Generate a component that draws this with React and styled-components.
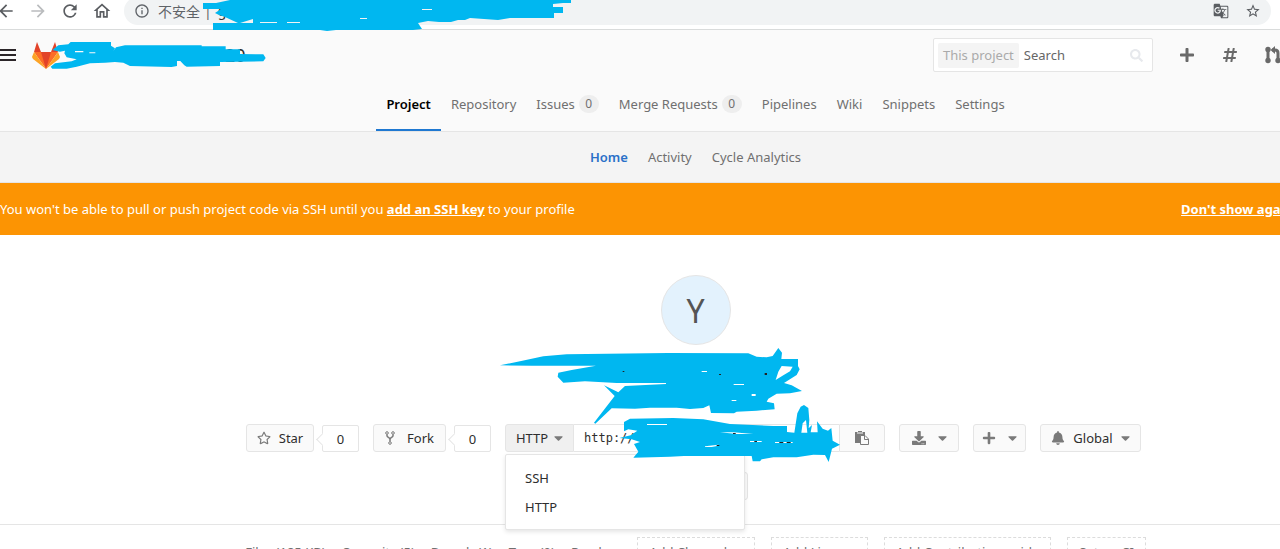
import React from 'react';
import styled, { createGlobalStyle, css } from 'styled-components';
import {
  MdArrowBack,
  MdArrowForward,
  MdGTranslate,
  MdInfoOutline,
  MdOutlineHome,
  MdRefresh,
  MdStarBorder,
} from 'react-icons/md';
import {
  FaBell,
  FaCaretDown,
  FaDownload,
  FaHashtag,
  FaPlus,
  FaRegStar,
  FaSearch,
} from 'react-icons/fa';

const colors = {
  text: '#2e2e2e',
  muted: '#707070',
  icon: '#7a7a7a',
  border: '#e5e5e5',
  blue: '#1f78d1',
  orange: '#fc9403',
  marker: '#00b7f0',
};

const GlobalStyle = createGlobalStyle`
  * {
    box-sizing: border-box;
  }
  html, body {
    margin: 0;
    height: 100%;
    overflow: hidden;
    background: #fff;
  }
  body, button, input {
    font-family: 'Noto Sans', 'Open Sans', 'Noto Sans CJK SC', sans-serif;
    font-size: 13px;
    line-height: 20px;
    color: ${colors.text};
  }
  a {
    color: inherit;
    text-decoration: none;
  }
`;

const Screen = styled.div`
  position: relative;
  height: 100vh;
  overflow: hidden;
`;

/* browser toolbar */

const BrowserBar = styled.div`
  display: flex;
  height: 30px;
  padding-right: 9px;
  border-bottom: 1px solid #d9dbdb;
`;

const BrowserButtons = styled.div`
  display: flex;
  height: 22px;
  margin-left: -10px;
  margin-right: 6px;
`;

const BrowserButton = styled.button`
  display: flex;
  align-items: center;
  justify-content: center;
  width: 32px;
  padding: 0;
  border: 0;
  background: none;
  color: ${(props) => (props.$dim ? '#babcbe' : '#5a5d61')};
  font-size: 20px;
`;

const AddressBar = styled.div`
  display: flex;
  flex: 1;
  align-items: center;
  height: 28px;
  margin-top: -3px;
  padding: 0 2px 0 10px;
  border-radius: 14px;
  background: #f1f3f4;
  color: #5f6368;
  font-size: 14px;
  svg {
    flex: none;
    font-size: 16px;
  }
`;

const Insecure = styled.span`
  margin: 0 4px 0 8px;
  font-family: 'Noto Sans CJK SC', sans-serif;
`;

const Address = styled.span`
  flex: 1;
  margin-left: 6px;
  color: #333;
`;

/* page header */

const Page = styled.div`
  min-width: 1391px;
`;

const Header = styled.header`
  height: 102px;
  border-bottom: 1px solid ${colors.border};
  background: #fafafa;
`;

const HeaderTop = styled.div`
  display: flex;
  align-items: center;
  height: 50px;
  padding-right: 97px;
`;

const Burger = styled.button`
  display: grid;
  gap: 3px;
  width: 16px;
  margin-right: 16px;
  padding: 0;
  border: 0;
  background: none;
`;

const BurgerLine = styled.span`
  height: 2px;
  background: #2b2528;
`;

const Title = styled.h1`
  flex: 1;
  margin: 0;
  padding-left: 165px;
  font-size: 18px;
  font-weight: 400;
  line-height: 24px;
`;

const SearchBox = styled.form`
  display: flex;
  align-items: center;
  width: 220px;
  height: 34px;
  margin-right: 12px;
  padding: 0 9px 0 4px;
  border: 1px solid ${colors.border};
  border-radius: 2px;
  background: #fff;
  svg {
    flex: none;
    color: #e7e9ed;
    font-size: 13px;
  }
`;

const Scope = styled.span`
  flex: none;
  padding: 2px 5px 3px;
  border-radius: 2px;
  background: #f4f4f4;
  color: #aaa;
`;

const SearchInput = styled.input`
  flex: 1;
  min-width: 0;
  padding: 0 5px;
  border: 0;
  background: none;
  &::placeholder {
    color: #666;
    opacity: 1;
  }
`;

const HeaderLink = styled.a`
  display: flex;
  justify-content: center;
  width: 43px;
  color: #696969;
  font-size: 16px;
`;

const Tabs = styled.nav`
  display: flex;
  justify-content: center;
  height: 51px;
`;

const Tab = styled.a`
  display: flex;
  align-items: center;
  gap: 4px;
  padding: 0 10px 3px;
  color: ${colors.muted};
  ${(props) =>
    props.$active &&
    css`
      padding-bottom: 1px;
      border-bottom: 2px solid ${colors.blue};
      color: #000;
      font-weight: 600;
    `}
`;

const Badge = styled.span`
  width: 20px;
  border-radius: 9px;
  background: #eee;
  font-size: 12px;
  line-height: 18px;
  text-align: center;
`;

const SubTabs = styled.nav`
  display: flex;
  justify-content: center;
  height: 51px;
  border-bottom: 1px solid ${colors.border};
  background: #f4f4f4;
`;

const SubTab = styled.a`
  padding: 15px 10px;
  color: ${(props) => (props.$active ? '#2a70c8' : colors.muted)};
  font-weight: ${(props) => (props.$active ? 600 : 400)};
`;

const Alert = styled.div`
  display: flex;
  justify-content: space-between;
  padding: 16px 98px 16px 0;
  background: ${colors.orange};
  color: #fff;
  a {
    font-weight: 700;
    text-decoration: underline;
  }
`;

/* project */

const Project = styled.main`
  display: flex;
  flex-direction: column;
  align-items: center;
  padding-top: 40px;
`;

const Avatar = styled.div`
  width: 70px;
  height: 70px;
  margin-bottom: 79px;
  border: 1px solid ${colors.border};
  border-radius: 50%;
  background: #e3f2fd;
  color: #555;
  font-size: 32px;
  line-height: 70px;
  text-align: center;
`;

const Actions = styled.div`
  display: flex;
  gap: 14px;
  margin-right: 4px;
`;

const Button = styled.button`
  display: flex;
  align-items: center;
  justify-content: center;
  gap: ${(props) => props.$gap || 8}px;
  width: ${(props) => props.$width}px;
  height: 28px;
  padding: 0;
  border: 1px solid ${colors.border};
  border-radius: 3px;
  background: #fafafa;
  svg {
    flex: none;
    color: ${colors.icon};
    font-size: 14px;
  }
`;

const Caret = styled(FaCaretDown)`
  width: 9px;
`;

const Counted = styled.div`
  display: flex;
  gap: 8px;
`;

const Count = styled.span`
  position: relative;
  width: 37px;
  height: 27px;
  margin-top: 1px;
  border: 1px solid ${colors.border};
  border-radius: 2px;
  line-height: 27px;
  text-align: center;
  &::before {
    content: '';
    position: absolute;
    top: 9px;
    left: -5px;
    width: 8px;
    height: 8px;
    border: solid ${colors.border};
    border-width: 0 0 1px 1px;
    background: #fff;
    transform: rotate(45deg);
  }
`;

const Clone = styled.div`
  position: relative;
  display: flex;
`;

const Protocol = styled(Button)`
  border-radius: 3px 0 0 3px;
  background: #f0f0f0;
`;

const CloneUrl = styled.input`
  width: 265px;
  padding: 0 10px;
  border: solid ${colors.border};
  border-width: 1px 0;
  font-family: 'DejaVu Sans Mono', monospace;
  font-size: 12px;
`;

const CopyButton = styled(Button)`
  border-radius: 0 3px 3px 0;
`;

const Menu = styled.ul`
  position: absolute;
  z-index: 1;
  top: 30px;
  left: 0;
  width: 240px;
  margin: 0;
  padding: 9px 0 7px;
  border: 1px solid ${colors.border};
  border-radius: 2px;
  background: #fff;
  box-shadow: 0 2px 4px rgba(0, 0, 0, 0.1);
  list-style: none;
`;

const MenuItem = styled.a`
  display: block;
  padding: 4px 19px 5px;
`;

const MoreButton = styled(Button)`
  margin: 20px 0 24px;
`;

const Stats = styled.nav`
  display: flex;
  justify-content: center;
  gap: 16px;
  align-self: stretch;
  padding-top: 12px;
  border-top: 1px solid ${colors.border};
  color: ${colors.muted};
  white-space: nowrap;
`;

const Stat = styled.a`
  padding: 5px 0;
`;

const AddLink = styled.a`
  padding: 4px 11px;
  border: 1px dashed #dcdcdc;
`;

const Marker = styled.svg`
  position: absolute;
  z-index: 2;
  top: 0;
  left: 0;
  pointer-events: none;
  fill: ${colors.marker};
`;

const Logo = () => (
  <svg width="28" height="27" viewBox="0 0 28 27">
    <path fill="#fc6d26" d="M2 10h24L14 27z" />
    <path fill="#e24329" d="M14 27 9 10h10zM2 10 5 0l4 10zM26 10 23 0l-4 10z" />
    <path fill="#fca326" d="M2 10 0 15l1 2 13 10zM26 10l2 5-1 2-13 10z" />
  </svg>
);

const ForkIcon = () => (
  <svg width="10" height="14" viewBox="0 0 10 14">
    <g fill="none" stroke={colors.icon} strokeWidth="1">
      <circle cx="2" cy="2" r="1.3" />
      <circle cx="8" cy="2" r="1.3" />
      <circle cx="5" cy="12" r="1.3" />
      <path d="M2 3.5v1.2C2 6.5 5 6.5 5 8.5v2M8 3.5v1.2C8 6.5 5 6.5 5 8.5" strokeWidth="1.5" />
    </g>
  </svg>
);

const MergeIcon = () => (
  <svg width="16" height="18" viewBox="0 0 16 18">
    <path fill="none" stroke="currentColor" strokeWidth="3" d="M3 3v12M7 4h3q3 0 3 3v8" />
    <g fill="currentColor">
      <path d="M10 0v8L5.5 4z" />
      <circle cx="3" cy="3.5" r="2.7" />
      <circle cx="3" cy="14.5" r="2.7" />
      <circle cx="13" cy="14.5" r="2.7" />
    </g>
  </svg>
);

const PasteIcon = () => (
  <svg width="14" height="14" viewBox="0 0 14 14">
    <path fill="currentColor" d="M0 1h3V0h4v1h3v3H6v8H0z" />
    <path fill="#fafafa" d="M2 1.5h6v1H2z" />
    <path fill="#fafafa" stroke="currentColor" d="M5.5 4.500h4.500l3.500 3.500v5.500h-8z" />
    <path fill="none" stroke="currentColor" d="M9.5 4.500v4h4" />
  </svg>
);

const MarkerStrokes = () => (
  <Marker width="1280" height="549" aria-hidden="true">
    <path d="M203 3h13l14-3h341v3h-8l-10 1v3h10v6h-9v5h-44l-12 2-28-2-5 2h-7l-7 2h-12l-11-1-10 2 4 6-9 1h-77l-9 1-7-1H213v-7h25l-13-6-6-2-4-2 6-4h-18z" />
    <path fill="#f1f3f4" d="M253 19v4h-13zM260 22h17v1h-17zM287 22h13v1h-13zM360 18h7v1h-7zM422 9h10v1h-10z" />
    <g transform="scale(0.33333)">
      <path d="M157 150l18-14 30-3 7-7h121v11l12 8-5 9 8-12 27-6h230v3h72v9h43v14l70 1 7 11-7 10-130 2v12l-100 2-7-4-12-13h-10v15l-16 3-125-3-20-10-25-2-30 2-45 2-40 10-30 6h-43l-5-6 13-10 50-6 15-6-30-6-7-12 2-8-15 3z" />
      <path fill="#fafafa" d="M225 153h25v4h-25zM268 157h18v3h-18z" />
    </g>
    <g transform="translate(490 260) scale(0.33333)" fillRule="evenodd">
      <path d="M30 316L90 304 160 289 230 283 535 279 775 280 800 290 830 292 848 288 865 264 876 278 874 297 924 297 924 318 929 328 920 345 882 369 905 376 936 393 900 400 860 401 835 416 830 425 852 430 854 448 800 452 740 455 732 460 663 459 658 436 640 444 600 447 560 443 480 443 435 446 365 445 316 491 312 488 374 408 342 376 385 397 405 378 528 372 528 369 380 369 285 364 220 368 203 350 205 338 245 330 318 317 125 317zM857 360L880 346 900 334 908 320 875 318 865 335z" />
      <path fill="#fff" d="M635 333h16v3h-16zM731 372h31v3h-31zM785 402h12v6h-12zM725 420h14v3h-14z" />
      <path fill="#222" d="M824 339h7v6h-7zM687 342h6v3h-6zM398 333h5v3h-5z" />
    </g>
    <g transform="translate(560 400) scale(0.33333)" fillRule="evenodd">
      <path d="M192 66L210 56 340 54 430 58 510 72 640 78 681 78 681 96 703 98 712 40 722 20 732 15 745 24 748 60 746 85 756 75 752 97 773 97 771 64 788 86 804 92 814 84 818 122 840 134 816 146 806 186 795 165 760 164 710 172 640 172 605 178 600 184 578 184 575 168 372 168 330 170 220 173 235 155 222 132 240 126 215 118 178 114 212 106 232 92 205 88 192 94zM724 98L728 70 738 60 742 98z" />
      <path fill="#fff" d="M261 72h60v3h-60zM480 97h40l60 5h-50zM435 139l40-5v3l-20 4h-20zM570 123h35v3h-35zM645 126h53v3h-53z" />
      <path fill="#222" d="M519 99h8v3h-8zM470 135h8v3h-8zM583 123h8v3h-8zM658 126h12v3h-12zM680 126h12v3h-12z" />
    </g>
  </Marker>
);

const App = () => (
  <Screen>
    <GlobalStyle />
    <BrowserBar>
      <BrowserButtons>
        <BrowserButton aria-label="Back"><MdArrowBack /></BrowserButton>
        <BrowserButton aria-label="Forward" $dim><MdArrowForward /></BrowserButton>
        <BrowserButton aria-label="Reload"><MdRefresh /></BrowserButton>
        <BrowserButton aria-label="Home page"><MdOutlineHome /></BrowserButton>
      </BrowserButtons>
      <AddressBar>
        <MdInfoOutline />
        <Insecure>不安全</Insecure>|
        <Address>git</Address>
        <BrowserButton aria-label="Translate"><MdGTranslate /></BrowserButton>
        <BrowserButton aria-label="Bookmark"><MdStarBorder /></BrowserButton>
      </AddressBar>
    </BrowserBar>

    <Page>
      <Header>
        <HeaderTop>
          <Burger aria-label="Menu">
            <BurgerLine />
            <BurgerLine />
            <BurgerLine />
          </Burger>
          <Logo />
          <Title>20</Title>
          <SearchBox role="search">
            <Scope>This project</Scope>
            <SearchInput aria-label="Search" placeholder="Search" />
            <FaSearch />
          </SearchBox>
          <HeaderLink href="#new" aria-label="New"><FaPlus /></HeaderLink>
          <HeaderLink href="#issues" aria-label="Issues"><FaHashtag /></HeaderLink>
          <HeaderLink href="#merge" aria-label="Merge requests"><MergeIcon /></HeaderLink>
        </HeaderTop>
        <Tabs>
          <Tab href="#project" $active>Project</Tab>
          <Tab href="#repository">Repository</Tab>
          <Tab href="#issues">Issues <Badge>0</Badge></Tab>
          <Tab href="#merge">Merge Requests <Badge>0</Badge></Tab>
          <Tab href="#pipelines">Pipelines</Tab>
          <Tab href="#wiki">Wiki</Tab>
          <Tab href="#snippets">Snippets</Tab>
          <Tab href="#settings">Settings</Tab>
        </Tabs>
      </Header>
      <SubTabs>
        <SubTab href="#home" $active>Home</SubTab>
        <SubTab href="#activity">Activity</SubTab>
        <SubTab href="#analytics">Cycle Analytics</SubTab>
      </SubTabs>
      <Alert>
        <span>
          You won't be able to pull or push project code via SSH until you{' '}
          <a href="#keys">add an SSH key</a> to your profile
        </span>
        <a href="#dismiss">Don't show again</a>
      </Alert>

      <Project>
        <Avatar>Y</Avatar>
        <Actions>
          <Counted>
            <Button $width={68}><FaRegStar />Star</Button>
            <Count>0</Count>
          </Counted>
          <Counted>
            <Button $width={73} $gap={12}><ForkIcon />Fork</Button>
            <Count>0</Count>
          </Counted>
          <Clone>
            <Protocol $width={69} $gap={6}>HTTP<Caret /></Protocol>
            <CloneUrl aria-label="Project clone URL" defaultValue="http://" />
            <CopyButton $width={46} aria-label="Copy URL"><PasteIcon /></CopyButton>
            <Menu>
              <li><MenuItem href="#ssh">SSH</MenuItem></li>
              <li><MenuItem href="#http">HTTP</MenuItem></li>
            </Menu>
          </Clone>
          <Button $width={60} $gap={12} aria-label="Download"><FaDownload /><Caret /></Button>
          <Button $width={53} $gap={12} aria-label="Add"><FaPlus /><Caret /></Button>
          <Button $width={101}><FaBell />Global<Caret /></Button>
        </Actions>
        <MoreButton $width={105} aria-label="More" />
        <Stats>
          <Stat href="#files">Files (185 KB)</Stat>
          <Stat href="#commits">Commits (5)</Stat>
          <Stat href="#branches">Branch (1)</Stat>
          <Stat href="#tags">Tags (0)</Stat>
          <Stat href="#readme">Readme</Stat>
          <AddLink href="#changelog">Add Changelog</AddLink>
          <AddLink href="#license">Add License</AddLink>
          <AddLink href="#contributing">Add Contribution guide</AddLink>
          <AddLink href="#ci">Set up CI</AddLink>
        </Stats>
      </Project>
    </Page>
    <MarkerStrokes />
  </Screen>
);

export default App;
